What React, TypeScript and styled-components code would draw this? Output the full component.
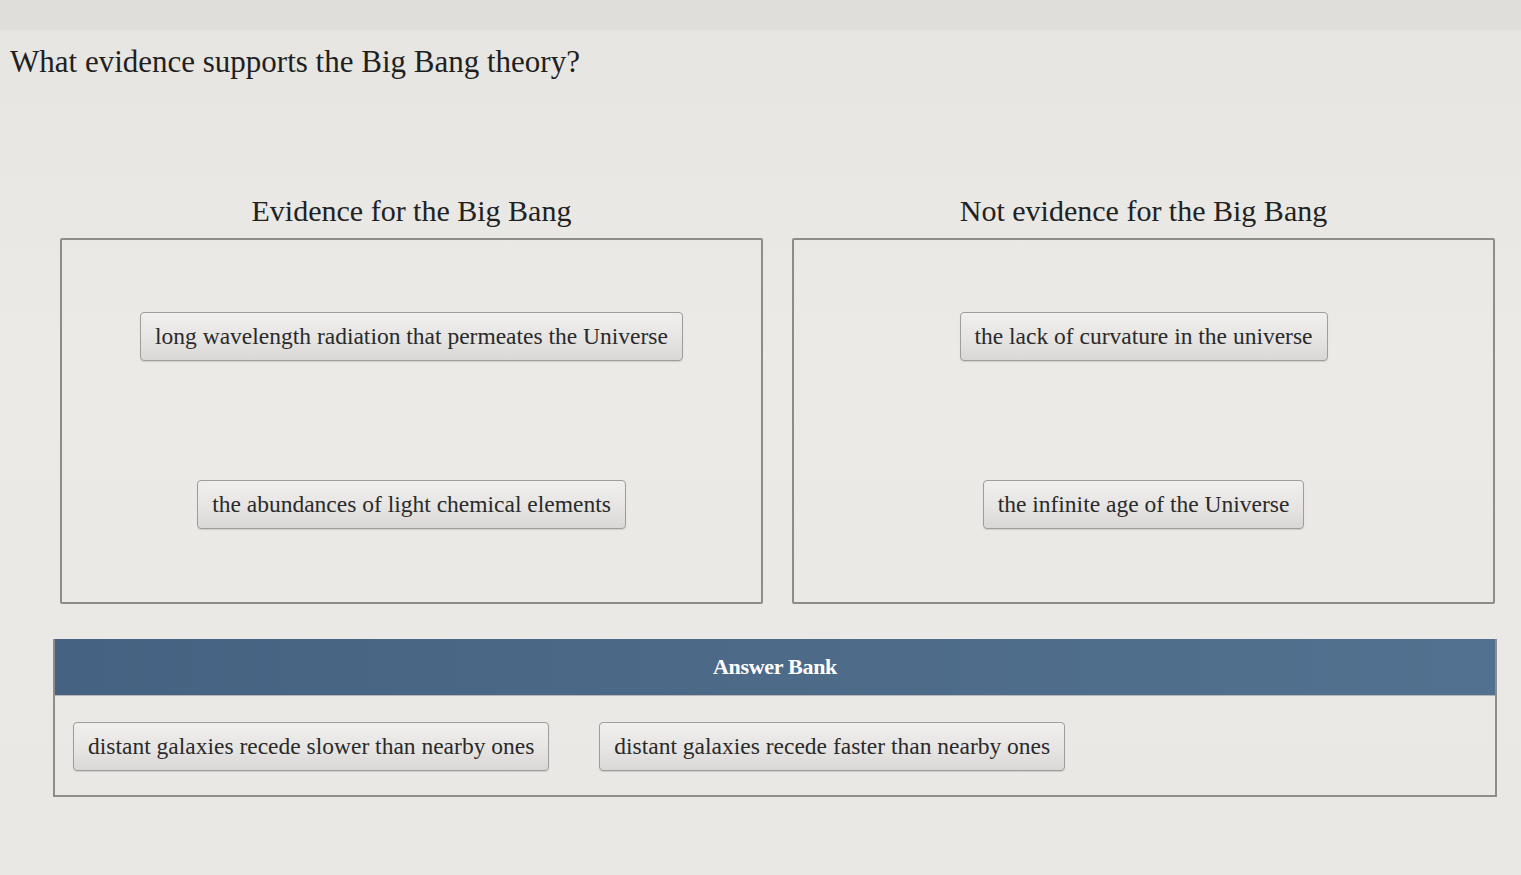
import React from 'react';
import styled, { createGlobalStyle } from 'styled-components';

// 분류 문제: 두 개의 드롭 영역 + 하단 보기(Answer Bank)
interface Category {
    title: string;
    items: string[];
}

const categories: Category[] = [
    {
        title: 'Evidence for the Big Bang',
        items: [
            'long wavelength radiation that permeates the Universe',
            'the abundances of light chemical elements',
        ],
    },
    {
        title: 'Not evidence for the Big Bang',
        items: ['the lack of curvature in the universe', 'the infinite age of the Universe'],
    },
];

const bankItems = [
    'distant galaxies recede slower than nearby ones',
    'distant galaxies recede faster than nearby ones',
];

const GlobalStyle = createGlobalStyle`
    html, body {
        margin: 0;
        padding: 0;
        background: #eae9e5;
        font-family: "Liberation Serif", "Times New Roman", serif;
        color: #262626;
    }
`;

export default function App() {
    return (
        <>
            <GlobalStyle />
            <Page>
                <TopStrip />
                <Question>What evidence supports the Big Bang theory?</Question>

                <Columns>
                    {categories.map((cat) => (
                        <Column key={cat.title}>
                            <ColumnTitle>{cat.title}</ColumnTitle>
                            <DropZone>
                                {cat.items.map((item) => (
                                    <Chip key={item}>{item}</Chip>
                                ))}
                            </DropZone>
                        </Column>
                    ))}
                </Columns>

                <Bank>
                    <BankHeader>Answer Bank</BankHeader>
                    <BankBody>
                        {bankItems.map((item) => (
                            <Chip key={item}>{item}</Chip>
                        ))}
                    </BankBody>
                </Bank>
            </Page>
        </>
    );
}

const Page = styled.div`
    min-height: 875px;
    display: flex;
    flex-direction: column;
    background: linear-gradient(180deg, #e6e5e1 0%, #ebeae6 40%, #e9e8e4 100%);
`;

const TopStrip = styled.div`
    height: 30px;
    background: #dfdedb;
`;

const Question = styled.h1`
    margin: 12px 0 0 10px;
    font-size: 31px;
    font-weight: 400;
    line-height: 40px;
    color: #1f1f1f;
`;

const Columns = styled.div`
    display: grid;
    grid-template-columns: 1fr 1fr;
    gap: 29px;
    margin: 110px 26px 0 60px;
`;

const Column = styled.div`
    display: flex;
    flex-direction: column;
    align-items: stretch;
`;

const ColumnTitle = styled.h2`
    margin: 0 0 8px;
    text-align: center;
    font-size: 30px;
    font-weight: 400;
    line-height: 38px;
    color: #222;
`;

const DropZone = styled.div`
    height: 366px;
    box-sizing: border-box;
    border: 2px solid #8c8c8a;
    border-radius: 2px;
    display: flex;
    flex-direction: column;
    align-items: center;
    justify-content: space-between;
    padding: 72px 20px 73px;
`;

const Chip = styled.div`
    box-sizing: border-box;
    height: 49px;
    padding: 0 14px;
    display: inline-flex;
    align-items: center;
    font-size: 23.5px;
    color: #2a2a2a;
    white-space: nowrap;
    background: linear-gradient(180deg, #f0efed 0%, #e6e5e3 55%, #d9d8d6 100%);
    border: 1px solid #9d9d9b;
    border-radius: 4px;
    box-shadow: 0 1px 1px rgba(0, 0, 0, 0.12);
`;

const Bank = styled.div`
    margin: 35px 24px 0 53px;
    border: 2px solid #8c8c8a;
    border-top: none;
`;

const BankHeader = styled.div`
    height: 56px;
    display: flex;
    align-items: center;
    justify-content: center;
    background: linear-gradient(90deg, #466282 0%, #4d6a89 50%, #52708f 100%);
    color: #fff;
    font-size: 22px;
    font-weight: 700;
    letter-spacing: -0.3px;
    border-bottom: 1px solid #b7b7b5;
`;

const BankBody = styled.div`
    display: flex;
    align-items: center;
    gap: 50px;
    padding: 26px 18px 24px;
`;
